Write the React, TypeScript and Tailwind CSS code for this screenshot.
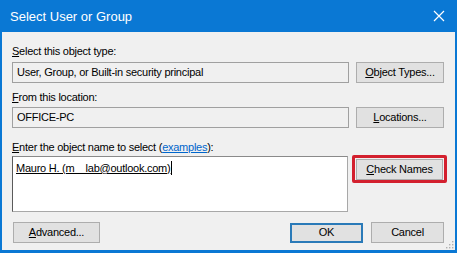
import React from "react";

const font = { fontFamily: '"Segoe UI", "Liberation Sans", Arial, sans-serif' };

function Btn({ children, className = "" }: { children: React.ReactNode; className?: string }) {
  return (
    <div
      className={
        "flex items-center justify-center h-[21px] bg-[#e1e1e1] border border-[#adadad] text-black " +
        className
      }
    >
      {children}
    </div>
  );
}

export default function App() {
  return (
    <div className="w-[457px] h-[253px] bg-[#0a78d4] flex flex-col overflow-hidden" style={font}>
      <div className="h-[32px] flex items-center justify-between pl-[10px] pr-[11px] text-white">
        <span className="text-[13px] leading-none">Select User or Group</span>
        <svg width="12" height="12" viewBox="0 0 12 12" className="mr-[1px]">
          <path d="M1 1 L11 11 M11 1 L1 11" stroke="white" strokeWidth="1.2" />
        </svg>
      </div>
      <div className="flex-1 mx-[2px] mb-[3px] bg-[#f0f0f0] px-[10px] flex flex-col relative text-[11px] tracking-[-0.25px] text-black">
        <div className="mt-[12px] h-[15px] leading-[15px]">
          <span className="underline">S</span>elect this object type:
        </div>
        <div className="mt-[3px] flex gap-[7px]">
          <div className="w-[337px] h-[21px] border border-[#a0a0a0] bg-[#f0f0f0] flex items-center pl-[4px]">
            User, Group, or Built-in security principal
          </div>
          <Btn className="w-[88px]">
            <span>
              <span className="underline">O</span>bject Types...
            </span>
          </Btn>
        </div>
        <div className="mt-[7px] h-[15px] leading-[15px]">
          <span className="underline">F</span>rom this location:
        </div>
        <div className="mt-[2px] flex gap-[7px]">
          <div className="w-[337px] h-[21px] border border-[#a0a0a0] bg-[#f0f0f0] flex items-center pl-[4px]">
            OFFICE-PC
          </div>
          <Btn className="w-[88px]">
            <span>
              <span className="underline">L</span>ocations...
            </span>
          </Btn>
        </div>
        <div className="mt-[12px] h-[15px] leading-[15px]">
          <span className="underline">E</span>nter the object name to select (
          <span className="text-[#0066cc] underline">examples</span>):
        </div>
        <div className="mt-[1px] flex gap-[7px]">
          <div className="w-[336px] h-[56px] border border-[#a8a8a8] border-l-[#5a5a5a] border-t-[#8a8a8a] bg-white pl-[3px] pt-[3px]">
            <span className="inline-block underline border-r border-black pr-[1px] leading-[14px]">
              Mauro H. (m&nbsp;&nbsp;&nbsp;&nbsp;lab@outlook.com)
            </span>
          </div>
          <div className="relative ml-[1px] mt-[3px]">
            <Btn className="w-[87px] h-[20px]">
              <span>
                <span className="underline">C</span>heck Names
              </span>
            </Btn>
            <div className="absolute left-[-4px] top-[-4px] w-[95px] h-[28px] border-[3px] border-[#d3202e] rounded-[2px]" />
          </div>
        </div>
        <div className="mt-[10px] flex items-center">
          <Btn className="w-[87px] ml-[1px] h-[20px]">
            <span>
              <span className="underline">A</span>dvanced...
            </span>
          </Btn>
          <div className="flex-1" />
          <div className="w-[73px] h-[20px] flex items-center justify-center bg-[#e1e1e1] border-2 border-[#2a7ab8]">
            OK
          </div>
          <Btn className="w-[73px] ml-[8px] h-[20px]">Cancel</Btn>
          <div className="w-[1px]" />
        </div>
        <svg width="8" height="8" viewBox="0 0 8 8" className="absolute right-[1px] bottom-[1px]">
          <rect x="6" y="0" width="1.4" height="1.4" fill="#b0b0b0" />
          <rect x="3" y="3" width="1.4" height="1.4" fill="#b0b0b0" />
          <rect x="6" y="3" width="1.4" height="1.4" fill="#b0b0b0" />
          <rect x="0" y="6" width="1.4" height="1.4" fill="#b0b0b0" />
          <rect x="3" y="6" width="1.4" height="1.4" fill="#b0b0b0" />
          <rect x="6" y="6" width="1.4" height="1.4" fill="#b0b0b0" />
        </svg>
      </div>
    </div>
  );
}
